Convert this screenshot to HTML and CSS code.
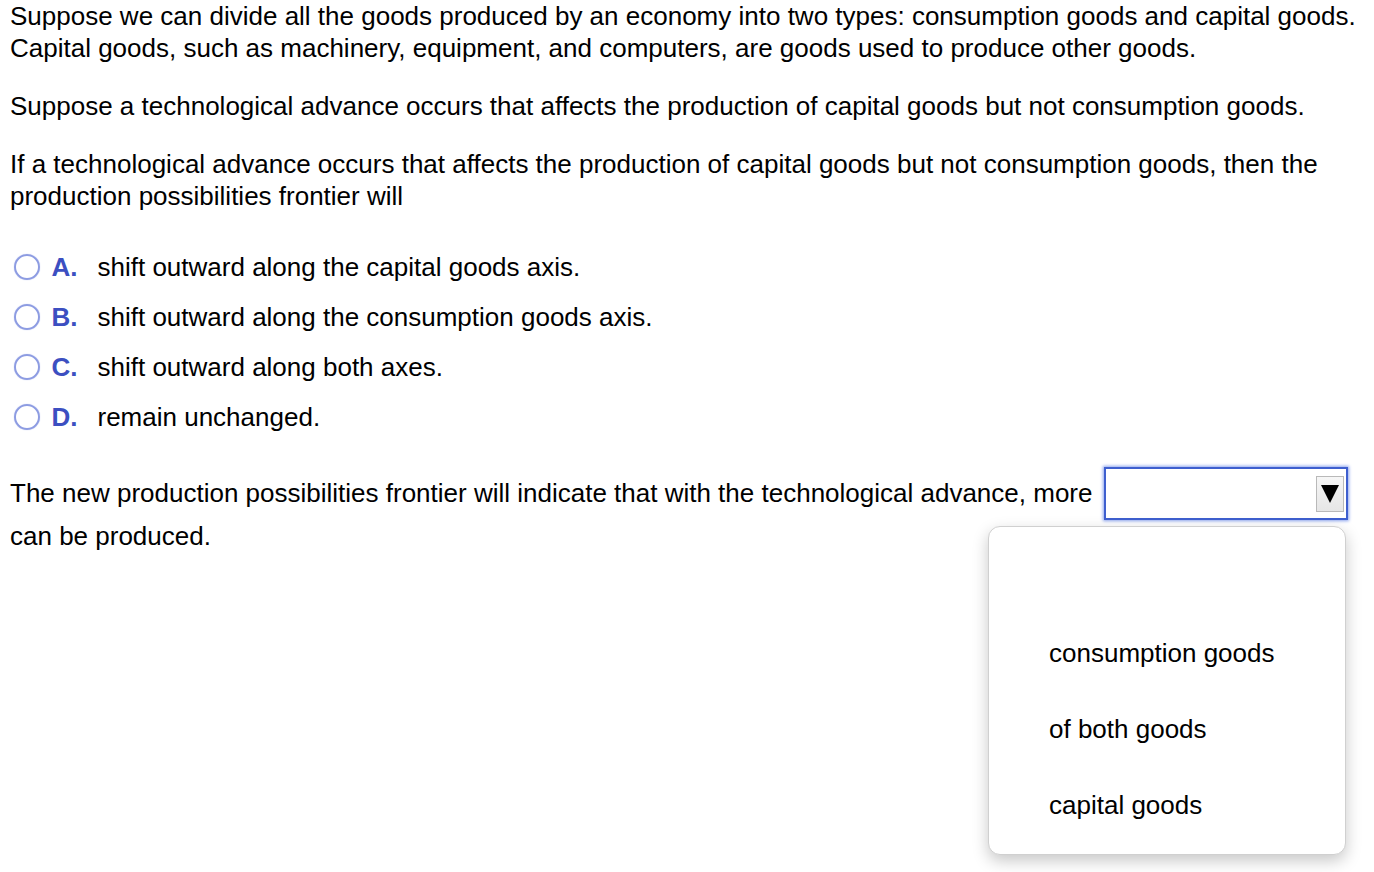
FILE: index.html
```html
<!DOCTYPE html>
<html>
<head>
<meta charset="utf-8">
<link rel="stylesheet" href="styles.css">
</head>
<body>
<div class="page">
  <p class="para first">Suppose we can divide all the goods produced by an economy into two types: consumption goods and capital goods. Capital goods, such as machinery, equipment, and computers, are goods used to produce other goods.</p>
  <p class="para">Suppose a technological advance occurs that affects the production of capital goods but not consumption goods.</p>
  <p class="para">If a technological advance occurs that affects the production of capital goods but not consumption goods, then the production possibilities frontier will</p>
  <div class="options">
    <div class="option"><span class="radio"></span><span class="letter">A.</span><span class="otext">shift outward along the capital goods axis.</span></div>
    <div class="option"><span class="radio"></span><span class="letter">B.</span><span class="otext">shift outward along the consumption goods axis.</span></div>
    <div class="option"><span class="radio"></span><span class="letter">C.</span><span class="otext">shift outward along both axes.</span></div>
    <div class="option"><span class="radio"></span><span class="letter">D.</span><span class="otext">remain unchanged.</span></div>
  </div>
  <p class="final">The new production possibilities frontier will indicate that with the technological advance, more <span class="select"><span class="arrow"><span class="tri"></span></span></span> can be produced.</p>
  <div class="popup">
    <div class="item">consumption goods</div>
    <div class="item">of both goods</div>
    <div class="item">capital goods</div>
  </div>
</div>
</body>
</html>
```

FILE: styles.css
```css
html, body {
  margin: 0;
  padding: 0;
  background: #ffffff;
}
body {
  font-family: "Liberation Sans", Arial, Helvetica, sans-serif;
  font-size: 26px;
  line-height: 32px;
  color: #000000;
}
.page {
  position: relative;
  width: 1374px;
  height: 872px;
  padding-left: 10px;
  box-sizing: border-box;
}
.para {
  margin: 26px 0 0 0;
}
.para.first {
  margin-top: 0;
}
.options {
  margin-top: 30px;
  display: flex;
  flex-direction: column;
}
.option {
  height: 50px;
  display: flex;
  align-items: center;
}
.radio {
  width: 22px;
  height: 22px;
  border: 2.5px solid #8d9ce2;
  border-radius: 50%;
  margin-left: 3.5px;
  box-shadow: 0 0 1px #aab4ec;
  flex: none;
}
.letter {
  color: #3c4fc1;
  font-weight: bold;
  margin-left: 12px;
  width: 46px;
  flex: none;
}
.final {
  margin: 25px 0 0 0;
  line-height: 32px;
}
.select {
  display: inline-block;
  box-sizing: border-box;
  width: 244px;
  height: 53px;
  border: 2px solid #3e5fcf;
  box-shadow: 0 0 3px 1px #8aa2ee;
  background: #fff;
  vertical-align: -18px;
  position: relative;
  margin-left: 4px;
}
.arrow {
  position: absolute;
  right: 2px;
  top: 7px;
  width: 28px;
  height: 36px;
  box-sizing: border-box;
  border: 1px solid #b9b9b9;
  background: linear-gradient(#f6f6f6, #e6e6e6);
  display: flex;
  align-items: center;
  justify-content: center;
}
.tri {
  width: 0;
  height: 0;
  border-left: 9px solid transparent;
  border-right: 9px solid transparent;
  border-top: 18px solid #000;
}
.popup {
  position: absolute;
  left: 988px;
  top: 526px;
  width: 358px;
  height: 329px;
  box-sizing: border-box;
  border: 1px solid #d0d0d0;
  border-radius: 12px;
  background: #fff;
  box-shadow: 0 6px 16px rgba(0, 0, 0, 0.22);
  padding-top: 88px;
}
.item {
  height: 76px;
  line-height: 76px;
  padding-left: 60px;
}
```
